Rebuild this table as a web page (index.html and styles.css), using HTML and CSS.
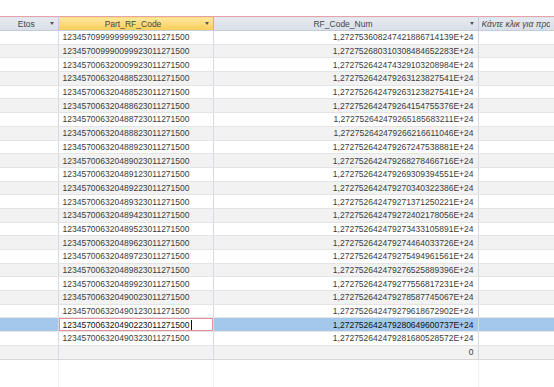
FILE: index.html
```
<!DOCTYPE html>
<html lang="el">
<head>
    <meta charset="UTF-8">
    <meta name="viewport" content="width=device-width, initial-scale=1.0">
    <title>Datasheet</title>
    <link rel="stylesheet" href="styles.css">
</head>
<body>
    <div class="sheet">
        <table class="grid">
            <colgroup>
                <col class="col-etos">
                <col class="col-part">
                <col class="col-num">
                <col class="col-add">
            </colgroup>
            <thead>
                <tr>
                    <th><div class="head"><span class="label">Etos</span><span class="arrow"></span></div></th>
                    <th class="current"><div class="head"><span class="label">Part_RF_Code</span><span class="arrow"></span></div></th>
                    <th><div class="head"><span class="label">RF_Code_Num</span><span class="arrow"></span></div></th>
                    <th class="add"><div class="head"><span class="label">Κάντε κλικ για προσθήκη</span></div></th>
                </tr>
            </thead>
            <tbody id="rows"></tbody>
            <tfoot>
                <tr class="new-row">
                    <td></td>
                    <td></td>
                    <td class="num">0</td>
                    <td></td>
                </tr>
                <tr class="blank">
                    <td></td><td></td><td></td><td></td>
                </tr>
            </tfoot>
        </table>
    </div>

    <script>
        const records = [
            ['123457099999999923011271500', '1,272753608247421886714139E+24'],
            ['123457009990099923011271500', '1,272752680310308484652283E+24'],
            ['123457006320009923011271500', '1,272752642474329103208984E+24'],
            ['123457006320488523011271500', '1,272752642479263123827541E+24'],
            ['123457006320488523011271500', '1,272752642479263123827541E+24'],
            ['123457006320488623011271500', '1,272752642479264154755376E+24'],
            ['123457006320488723011271500', '1,272752642479265185683211E+24'],
            ['123457006320488823011271500', '1,272752642479266216611046E+24'],
            ['123457006320488923011271500', '1,272752642479267247538881E+24'],
            ['123457006320489023011271500', '1,272752642479268278466716E+24'],
            ['123457006320489123011271500', '1,272752642479269309394551E+24'],
            ['123457006320489223011271500', '1,272752642479270340322386E+24'],
            ['123457006320489323011271500', '1,272752642479271371250221E+24'],
            ['123457006320489423011271500', '1,272752642479272402178056E+24'],
            ['123457006320489523011271500', '1,272752642479273433105891E+24'],
            ['123457006320489623011271500', '1,272752642479274464033726E+24'],
            ['123457006320489723011271500', '1,272752642479275494961561E+24'],
            ['123457006320489823011271500', '1,272752642479276525889396E+24'],
            ['123457006320489923011271500', '1,272752642479277556817231E+24'],
            ['123457006320490023011271500', '1,272752642479278587745067E+24'],
            ['123457006320490123011271500', '1,272752642479279618672902E+24'],
            ['123457006320490223011271500', '1,272752642479280649600737E+24'],
            ['123457006320490323011271500', '1,272752642479281680528572E+24']
        ];
        const selected = 21;
        const body = document.getElementById('rows');

        records.forEach(([code, num], i) => {
            const tr = document.createElement('tr');
            if (i === selected) tr.className = 'selected';
            tr.innerHTML = '<td></td>' +
                '<td class="code">' + (i === selected ? '<span class="editing">' + code + '</span>' : code) + '</td>' +
                '<td class="num">' + num + '</td>' +
                '<td></td>';
            body.appendChild(tr);
        });
    </script>
</body>
</html>
```

FILE: styles.css
```
* {
    margin: 0;
    padding: 0;
    box-sizing: border-box;
}

body {
    font-family: 'Liberation Sans', Arial, sans-serif;
    font-size: 8.5px;
    color: #3b3b3b;
    background: #fff;
    overflow: hidden;
    width: 554px;
    height: 387px;
}

.sheet {
    padding-top: 16px;
    height: 100%;
}

/* Datasheet grid */
.grid {
    border-collapse: collapse;
    table-layout: fixed;
    width: 554px;
    border-top: 1px solid #e7a2a9;
}

.col-etos { width: 58px; }
.col-part { width: 155px; }
.col-num  { width: 265px; }
.col-add  { width: 76px; }

.grid th {
    height: 14px;
    font-weight: normal;
    color: #444;
    background: linear-gradient(#e6eaf0, #d9dfe8);
    border-right: 1px solid #c3ccd8;
    border-bottom: 1px solid #c3ccd8;
    padding: 0;
}

.grid th.current {
    background: linear-gradient(#fde7a0, #f9cd55);
    border-right-color: #e0b64a;
}

.head {
    display: flex;
    align-items: center;
    height: 13px;
    padding: 0 4px 0 3px;
}

.head .label {
    flex: 1;
    text-align: center;
    white-space: nowrap;
}

.arrow {
    width: 0;
    height: 0;
    border-left: 2.5px solid transparent;
    border-right: 2.5px solid transparent;
    border-top: 3px solid #555;
}

.grid th.add {
    border-right: none;
}

.grid th.add .label {
    text-align: left;
    font-style: italic;
    overflow: hidden;
}

.grid td {
    height: 13.7px;
    padding: 0 4px;
    white-space: nowrap;
    overflow: hidden;
    border-right: 1px solid #d3dae4;
    border-bottom: 1px solid #e4e4e4;
    line-height: 12px;
}

#rows tr:nth-child(even) td,
.new-row td {
    background: #f2f2f2;
}

.grid td.num {
    text-align: right;
}

/* Selected record */
#rows tr.selected td {
    background: #a4c8eb;
    color: #111;
}

#rows tr.selected td.code {
    background: #fff;
    box-shadow: inset 0 0 0 1px #ea8f99;
}

.editing {
    border-right: 1px solid #111;
    padding-right: 1px;
}

.new-row td {
    border-bottom: 1px solid #d6d6d6;
}

.blank td {
    height: 40px;
    background: #fff;
    border-bottom: none;
    border-right: 1px solid #eef1f5;
}
```
